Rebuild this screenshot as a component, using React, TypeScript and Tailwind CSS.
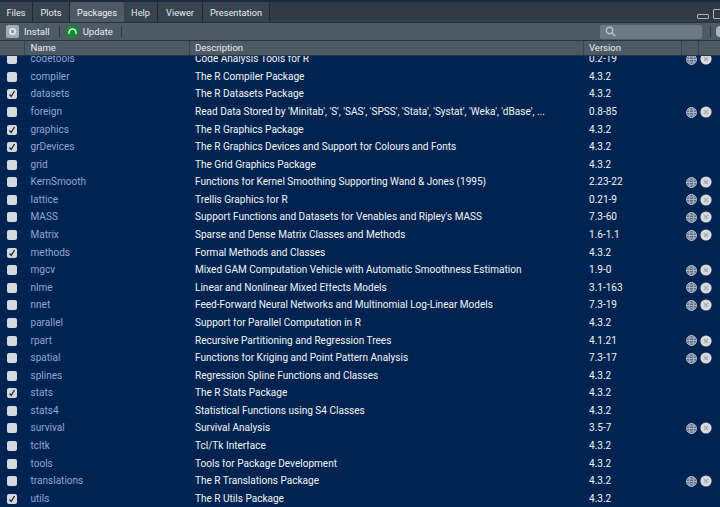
import React from 'react';

const font = { fontFamily: 'Roboto, "Noto Sans", sans-serif' };

interface Pkg {
  name: string;
  desc: string;
  version: string;
  checked?: boolean;
  web?: boolean;
}

const packages: Pkg[] = [
  { name: 'codetools', desc: 'Code Analysis Tools for R', version: '0.2-19', web: true },
  { name: 'compiler', desc: 'The R Compiler Package', version: '4.3.2' },
  { name: 'datasets', desc: 'The R Datasets Package', version: '4.3.2', checked: true },
  { name: 'foreign', desc: "Read Data Stored by 'Minitab', 'S', 'SAS', 'SPSS', 'Stata', 'Systat', 'Weka', 'dBase', ...", version: '0.8-85', web: true },
  { name: 'graphics', desc: 'The R Graphics Package', version: '4.3.2', checked: true },
  { name: 'grDevices', desc: 'The R Graphics Devices and Support for Colours and Fonts', version: '4.3.2', checked: true },
  { name: 'grid', desc: 'The Grid Graphics Package', version: '4.3.2' },
  { name: 'KernSmooth', desc: 'Functions for Kernel Smoothing Supporting Wand & Jones (1995)', version: '2.23-22', web: true },
  { name: 'lattice', desc: 'Trellis Graphics for R', version: '0.21-9', web: true },
  { name: 'MASS', desc: "Support Functions and Datasets for Venables and Ripley's MASS", version: '7.3-60', web: true },
  { name: 'Matrix', desc: 'Sparse and Dense Matrix Classes and Methods', version: '1.6-1.1', web: true },
  { name: 'methods', desc: 'Formal Methods and Classes', version: '4.3.2', checked: true },
  { name: 'mgcv', desc: 'Mixed GAM Computation Vehicle with Automatic Smoothness Estimation', version: '1.9-0', web: true },
  { name: 'nlme', desc: 'Linear and Nonlinear Mixed Effects Models', version: '3.1-163', web: true },
  { name: 'nnet', desc: 'Feed-Forward Neural Networks and Multinomial Log-Linear Models', version: '7.3-19', web: true },
  { name: 'parallel', desc: 'Support for Parallel Computation in R', version: '4.3.2' },
  { name: 'rpart', desc: 'Recursive Partitioning and Regression Trees', version: '4.1.21', web: true },
  { name: 'spatial', desc: 'Functions for Kriging and Point Pattern Analysis', version: '7.3-17', web: true },
  { name: 'splines', desc: 'Regression Spline Functions and Classes', version: '4.3.2' },
  { name: 'stats', desc: 'The R Stats Package', version: '4.3.2', checked: true },
  { name: 'stats4', desc: 'Statistical Functions using S4 Classes', version: '4.3.2' },
  { name: 'survival', desc: 'Survival Analysis', version: '3.5-7', web: true },
  { name: 'tcltk', desc: 'Tcl/Tk Interface', version: '4.3.2' },
  { name: 'tools', desc: 'Tools for Package Development', version: '4.3.2' },
  { name: 'translations', desc: 'The R Translations Package', version: '4.3.2', web: true },
  { name: 'utils', desc: 'The R Utils Package', version: '4.3.2', checked: true },
];

const tabs = [
  { label: 'Files', width: 'w-[33px]' },
  { label: 'Plots', width: 'w-[37px]' },
  { label: 'Packages', width: 'w-[54px]' },
  { label: 'Help', width: 'w-[34px]' },
  { label: 'Viewer', width: 'w-[45px]' },
  { label: 'Presentation', width: 'w-[67px]' },
];

const Globe = () => (
  <svg width="11" height="11" viewBox="0 0 10 10" fill="none" stroke="#b4bdcb" strokeWidth="0.8">
    <circle cx="5" cy="5" r="4.6" fill="#566886" />
    <ellipse cx="5" cy="5" rx="2" ry="4.6" />
    <path d="M0.4 5h9.2M1.2 2.7h7.6M1.2 7.3h7.6" />
  </svg>
);

const Remove = () => (
  <svg width="12" height="12" viewBox="0 0 12 12">
    <circle cx="6" cy="6" r="5.6" fill="#d8dade" />
    <path d="M4 4l4 4M8 4l-4 4" stroke="#a5acb5" strokeWidth="1.4" />
  </svg>
);

const Row = ({ pkg }: { pkg: Pkg }) => (
  <div className="flex h-[17.58px] shrink-0 items-center border-b border-[#04204a] text-[10.05px] leading-none">
    <div className="flex w-[25px] shrink-0 items-center pl-[6.5px]">
      <div className="flex h-[10px] w-[10px] items-center justify-center rounded-[2px] bg-[#d5d8dc]">
        {pkg.checked && (
          <svg width="8" height="8" viewBox="0 0 8 8" fill="none" stroke="#22262b" strokeWidth="1.3">
            <path d="M1.5 4.5L3.2 6.5L6.5 1" />
          </svg>
        )}
      </div>
    </div>
    <div className="w-[165px] shrink-0 pl-[5.5px] text-[#8fa6d8]">{pkg.name}</div>
    <div className="w-[394px] shrink-0 truncate pl-[5px] text-[#f2f4f7]">{pkg.desc}</div>
    <div className="w-[98px] shrink-0 pl-[5px] text-[#f2f4f7]">{pkg.version}</div>
    <div className="flex w-[18px] shrink-0 justify-center">{pkg.web && <Globe />}</div>
    <div className="flex w-[20px] shrink-0 justify-start">{pkg.web && <Remove />}</div>
  </div>
);

export default function App() {
  return (
    <div className="flex h-[507px] w-[720px] flex-col overflow-hidden bg-[#002451]" style={font}>
      {/* tab strip */}
      <div className="flex h-[22px] shrink-0 items-end border-t-2 border-[#1c2c40] bg-[#2f3a44] text-[9.2px] leading-none text-[#e8ecef]">
        {tabs.map((t) =>
          t.label === 'Packages' ? (
            <div key={t.label} className={`flex h-[20px] items-center justify-center rounded-t-[2px] bg-[#4d5a66] pt-[1px] text-[#f2f4f6] ${t.width}`}>
              {t.label}
            </div>
          ) : (
            <div key={t.label} className={`flex h-[20px] items-center justify-center border-r border-[#20292f] bg-[#37434d] pt-[1px] ${t.width}`}>
              {t.label}
            </div>
          ),
        )}
        <div className="ml-auto mb-[3px] mr-[-3px] flex items-end gap-[4px]">
          <div className="h-[5px] w-[12px] rounded-[1px] border border-[#aeb6bc]" />
          <div className="h-[10px] w-[10px] rounded-[1px] border border-[#aeb6bc]" />
        </div>
      </div>

      {/* toolbar */}
      <div className="flex h-[18px] shrink-0 items-center border-t border-[#28333c] bg-[#4d5a66] pl-[6px] text-[9.5px] leading-none text-[#e8ecef]">
        <div className="flex h-[13px] w-[13px] items-center justify-center rounded-[2px] bg-[#a3acb4]">
          <div className="flex h-[7px] w-[7px] items-center justify-center rounded-full bg-[#e4e7ea]">
            <div className="h-[3px] w-[3px] bg-[#8b949c]" />
          </div>
        </div>
        <span className="ml-[5px]">Install</span>
        <div className="ml-[9px] h-[11px] w-px bg-[#2d3740]" />
        <div className="ml-[6px] flex h-[13px] w-[13px] items-center justify-center rounded-full bg-[#0f8a2e]">
          <svg width="11" height="11" viewBox="0 0 11 11" fill="none" stroke="#e6f5ea" strokeWidth="1.4">
            <path d="M2.2 8A3.6 3.6 0 1 1 8.8 8" />
          </svg>
        </div>
        <span className="ml-[4px]">Update</span>
        <div className="ml-[8px] h-[11px] w-px bg-[#2d3740]" />
        <div className="ml-auto flex items-center">
          <div className="flex h-[14px] w-[102px] items-center rounded-[2px] bg-[#6d7a84] pl-[5px]">
            <svg width="11" height="11" viewBox="0 0 11 11" fill="none" stroke="#b9c1c8" strokeWidth="1.4">
              <circle cx="4.5" cy="4.5" r="3.2" />
              <path d="M7 7l3.3 3.3" />
            </svg>
          </div>
          <div className="ml-[8px] h-[11px] w-px bg-[#2d3740]" />
          <div className="ml-[5px] h-[11px] w-[4px] rounded-l-full bg-[#aab3ba]" />
        </div>
      </div>

      {/* table head */}
      <div className="flex h-[16px] shrink-0 border-y border-[#28333c] bg-[#4d5a66] text-[9.5px] leading-none text-[#e8ecef]">
        <div className="w-[25px] shrink-0 border-r border-[#37424c]" />
        <div className="flex w-[165px] shrink-0 items-center border-r border-[#37424c] pl-[5.5px]">Name</div>
        <div className="flex w-[394px] shrink-0 items-center border-r border-[#37424c] pl-[5px]">Description</div>
        <div className="flex w-[98px] shrink-0 items-center border-r border-[#37424c] pl-[5px]">Version</div>
        <div className="w-[17px] shrink-0 border-r border-[#37424c]" />
        <div className="w-[21px] shrink-0" />
      </div>

      {/* rows, scrolled so the first one is cut off */}
      <div className="min-h-0 flex-1 overflow-hidden">
        <div className="mt-[-5px] flex flex-col">
          {packages.map((p) => (
            <Row key={p.name} pkg={p} />
          ))}
        </div>
      </div>
    </div>
  );
}
